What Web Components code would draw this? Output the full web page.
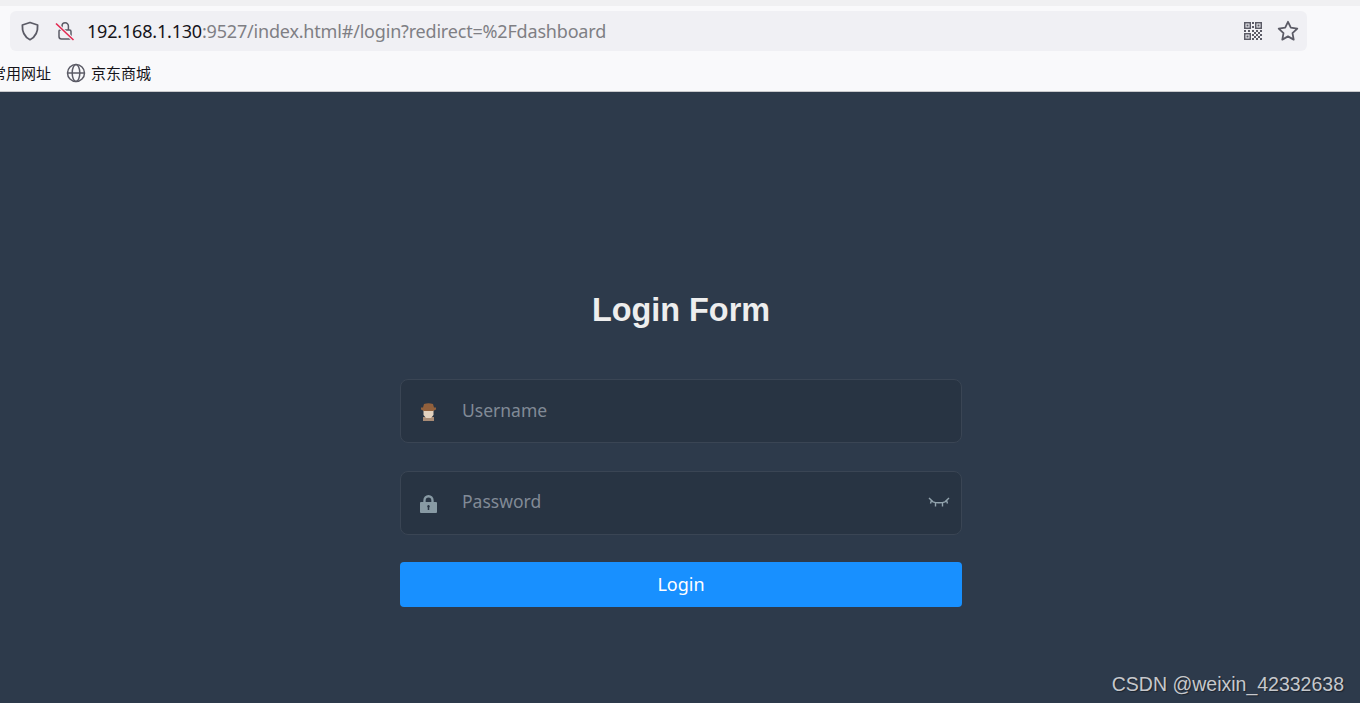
<!DOCTYPE html>
<html lang="zh">
<head>
<meta charset="utf-8">
<title>Login Form</title>
<style>
    html, body { margin: 0; height: 100%; }
    body { display: flex; flex-direction: column; height: 703px; overflow: hidden; font-family: "Noto Sans", "Noto Sans CJK SC", sans-serif; }
</style>
</head>
<body>
<browser-toolbar url-host="192.168.1.130" url-rest=":9527/index.html#/login?redirect=%2Fdashboard"></browser-toolbar>
<bookmark-bar>
    <span class="cut">常用网址</span>
    <bookmark-item>京东商城</bookmark-item>
</bookmark-bar>
<login-page>
    <login-field slot="fields" placeholder="Username" icon="user"></login-field>
    <login-field slot="fields" placeholder="Password" icon="lock" eye></login-field>
</login-page>
<script>
/** Barra superior del navegador con la dirección. */
class BrowserToolbar extends HTMLElement{
    constructor(){
        super();
        this.attachShadow({mode: 'open'});
    }
    connectedCallback() {
        this.render();
    }
    render(){
        const style = `
            <style>
                :host{ display: block; flex: none; height: 51px; padding-top: 11px; box-sizing: border-box; background: linear-gradient(#f0f0f2 0 6px, #f9f9fb 6px); }
                #bar{ display: flex; align-items: center; height: 40px; margin: 0 53px 0 10px; background: #f0f0f4; border-radius: 6px; }
                #shield{ margin-left: 10px; }
                #unlock{ margin-left: 15px; }
                #url{ margin-left: 12px; flex: 1; font: 18px/24px "Noto Sans", sans-serif; color: #7f7f84; white-space: nowrap; letter-spacing: -0.19px; }
                #url b{ font-weight: 400; color: #15141a; }
                #qr{ margin-right: 15px; }
                #star{ margin-right: 8px; }
                svg{ flex: none; display: block; }
            </style>
        `;
        // Celdas sueltas del código QR, en una grilla de 2px
        const qrCells = [[8,0],[8,4],[0,8],[4,8],[8,8],[12,8],[16,8],[10,10],[14,10],[8,12],[12,12],[16,12],[10,14],[14,14],[8,16],[12,16],[16,16]]
            .map(c => `<rect x="${c[0]}" y="${c[1]}" width="2" height="2"/>`).join('');
        const body = `
            <div id="bar">
                <svg id="shield" width="20" height="20" viewBox="0 0 20 20" fill="none" stroke="#5b5b66" stroke-width="1.8" stroke-linejoin="round"><path d="M10 1.500 L17.600 4 C18 10.500 15.800 15.800 10 18.700 C4.200 15.800 2 10.500 2.400 4 Z"/></svg>
                <svg id="unlock" width="20" height="20" viewBox="0 0 20 20" fill="none"><path d="M5 9h9.500a1.500 1.500 0 0 1 1.500 1.500v6a1.500 1.500 0 0 1-1.500 1.500h-8A2.500 2.500 0 0 1 4 15.500v-5.500A1 1 0 0 1 5 9Z M7 9V5a3.200 3.200 0 0 1 6.400 0V9" stroke="#5b5b66" stroke-width="1.500"/><path d="M1 2.500 L18.500 19" stroke="#f0f0f4" stroke-width="3.500"/><path d="M1 2.500 L18.500 19" stroke="#e22850" stroke-width="1.600"/></svg>
                <div id="url"><b>${this.getAttribute('url-host')}</b>${this.getAttribute('url-rest')}</div>
                <svg id="qr" width="18" height="18" viewBox="0 0 18 18" fill="#5b5b66"><path fill-rule="evenodd" d="M0 0h7v7H0Zm1.500 1.500v4h4v-4Z M11 0h7v7h-7Zm1.500 1.500v4h4v-4Z M0 11h7v7H0Zm1.500 1.500v4h4v-4Z"/><rect x="2.500" y="2.500" width="2" height="2"/><rect x="13.500" y="2.500" width="2" height="2"/><rect x="2.500" y="13.500" width="2" height="2"/>${qrCells}</svg>
                <svg id="star" width="22" height="22" viewBox="0 0 22 22" fill="none" stroke="#5b5b66" stroke-width="1.800" stroke-linejoin="round"><path d="M11 1.800 L13.800 7.700 L20.300 8.600 L15.500 13.100 L16.700 19.600 L11 16.400 L5.300 19.600 L6.500 13.100 L1.700 8.600 L8.200 7.700 Z"/></svg>
            </div>
        `;
        this.shadowRoot.innerHTML = style + body;
    }
}

/** Barra de marcadores. */
class BookmarkBar extends HTMLElement{
    constructor(){
        super();
        this.attachShadow({mode: 'open'});
    }
    connectedCallback() {
        this.shadowRoot.innerHTML = `
            <style>
                :host{ display: flex; flex: none; align-items: center; gap: 15px; height: 41px; box-sizing: border-box; padding-top: 3px; margin-left: -9px; background: #f9f9fb; border-bottom: 1px solid #c9c9cc; font: 15px "Noto Sans CJK SC", sans-serif; color: #15141a; white-space: nowrap; }
            </style>
            <slot></slot>
        `;
    }
}

/** Un marcador con el icono de globo. */
class BookmarkItem extends HTMLElement{
    constructor(){
        super();
        this.attachShadow({mode: 'open'});
    }
    connectedCallback() {
        this.shadowRoot.innerHTML = `
            <style>
                :host{ display: inline-flex; align-items: center; gap: 5px; }
                svg{ display: block; margin-top: 1px; }
            </style>
            <svg width="20" height="20" viewBox="0 0 20 20" fill="none" stroke="#5b5b66" stroke-width="1.500"><circle cx="10" cy="10" r="8.500"/><ellipse cx="10" cy="10" rx="3.800" ry="8.500"/><path d="M1.500 10h17"/></svg>
            <slot></slot>
        `;
    }
}

/** Campo del formulario con icono a la izquierda. */
class LoginField extends HTMLElement{
    constructor(){
        super();
        this.attachShadow({mode: 'open'});
    }
    connectedCallback() {
        this.render();
    }
    icon(name){
        if(name === 'user'){
            return `<svg width="18" height="18" viewBox="0 0 18 18">
                <path d="M3 14h11v4H3Z" fill="#a98c76"/>
                <path d="M3.500 7h10v5l-2.500 3H6l-2.500-3Z" fill="#e3d2bf"/>
                <path d="M4 1q4.500-1.500 9 0l1 3.500h2v2l-3 1.500H4L1 6.500v-2h2Z" fill="#91603c"/>
            </svg>`;
        }
        return `<svg width="17" height="18" viewBox="0 0 18 18" preserveAspectRatio="none">
            <path fill-rule="evenodd" d="M3.500 7V5.500a5.500 5.500 0 0 1 11 0V7H17a1 1 0 0 1 1 1v9a1 1 0 0 1-1 1H1a1 1 0 0 1-1-1V8a1 1 0 0 1 1-1Zm2.500 0h6V5.500a3 3 0 0 0-6 0ZM9 10a1.400 1.400 0 0 0-.8 2.500V15h1.600v-2.500A1.400 1.400 0 0 0 9 10Z" fill="#889aa4"/>
        </svg>`;
    }
    render(){
        const eye = this.hasAttribute('eye') ? `
            <svg id="eye" width="22" height="12" viewBox="0 0 22 12" fill="none" stroke="#93a4ae" stroke-width="1.400"><path d="M1 1 L5 4.800 C8 6 14 6 17 4.800 L21 1"/><path d="M3.500 3.500 L2.500 6.500M18.500 3.500 L19.500 6.500M7.500 5.500V9.500M14.500 5.500V9.500"/></svg>` : '';
        const style = `
            <style>
                :host{ display: block; height: 64px; box-sizing: border-box; background: #283443; border: 1px solid #3a4554; border-radius: 8px; }
                :host([eye]) #label{ margin-top: -4px; }
                #row{ display: flex; align-items: center; height: 100%; padding: 0 11px 0 19px; box-sizing: border-box; }
                #label{ flex: 1; margin-left: 24px; margin-top: -2px; font: 17.500px "Noto Sans", sans-serif; color: #818a96; }
                #icon{ flex: none; display: block; width: 18px; margin-top: 1px; }
                #icon svg, #eye{ display: block; }
                #eye{ flex: none; }
            </style>
        `;
        const body = `
            <div id="row">
                <span id="icon">${this.icon(this.getAttribute('icon'))}</span>
                <span id="label">${this.getAttribute('placeholder')}</span>
                ${eye}
            </div>
        `;
        this.shadowRoot.innerHTML = style + body;
    }
}

/** Página de acceso. */
class LoginPage extends HTMLElement{
    constructor(){
        super();
        this.attachShadow({mode: 'open'});
    }
    connectedCallback() {
        this.shadowRoot.innerHTML = `
            <style>
                :host{ display: block; flex: 1; position: relative; background: #2d3a4b; overflow: hidden; }
                #form{ width: 562px; margin-left: 400px; padding-top: 198px; }
                h3{ margin: 0 0 49px; text-align: center; font: bold 32.400px/40px "Liberation Sans", sans-serif; color: #eee; }
                #fields{ display: flex; flex-direction: column; gap: 28px; }
                button{ display: block; width: 100%; height: 45px; margin-top: 27px; padding: 0 0 2px; border: 0; border-radius: 4px; background: #1890ff; color: #fff; font: 18px "Noto Sans", sans-serif; }
                #mark{ position: absolute; right: 16px; bottom: 7px; font: 19.500px "Liberation Sans", sans-serif; color: #c6c8cc; text-shadow: 1px 1px 1px rgba(0,0,0,.4); }
            </style>
            <div id="form">
                <h3>Login Form</h3>
                <div id="fields"><slot name="fields"></slot></div>
                <button type="button">Login</button>
            </div>
            <div id="mark">CSDN @weixin_42332638</div>
        `;
    }
}

customElements.define('browser-toolbar', BrowserToolbar);
customElements.define('bookmark-bar', BookmarkBar);
customElements.define('bookmark-item', BookmarkItem);
customElements.define('login-field', LoginField);
customElements.define('login-page', LoginPage);
</script>
</body>
</html>
